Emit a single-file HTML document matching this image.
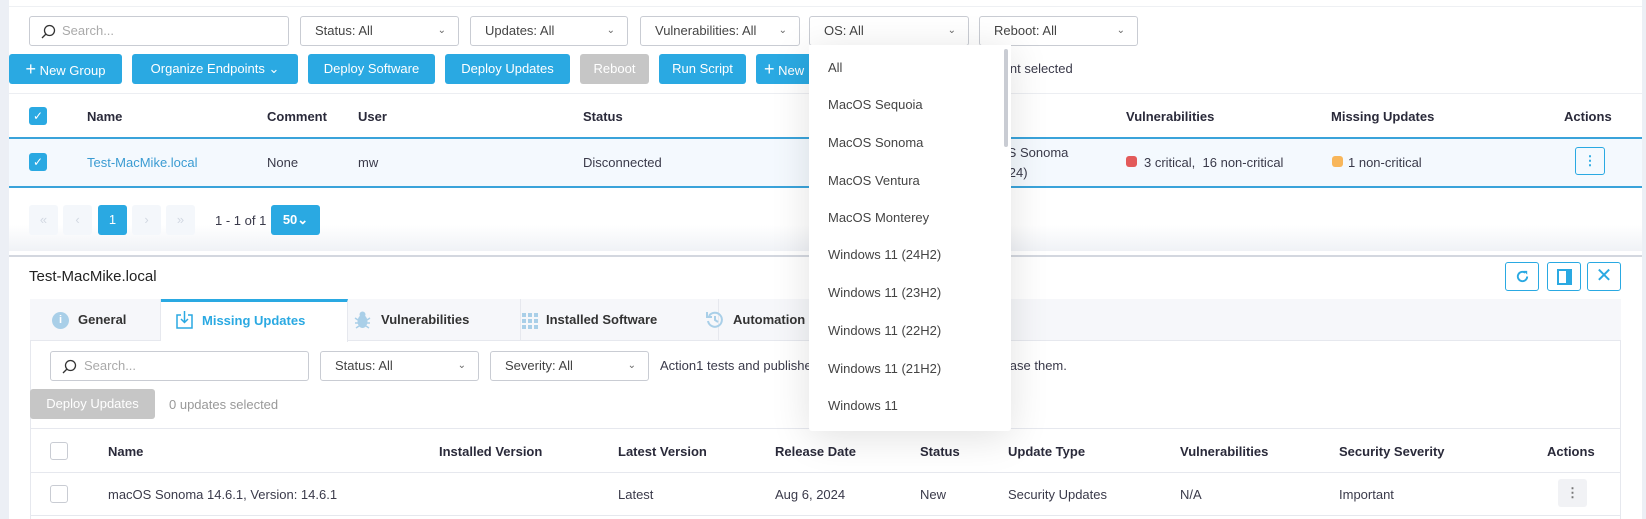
<!DOCTYPE html>
<html><head><meta charset="utf-8"><style>
*{box-sizing:border-box;margin:0;padding:0}
body{width:1646px;height:519px;overflow:hidden;background:#eceff5;font-family:"Liberation Sans",sans-serif;font-size:13px;color:#3a3a4a;position:relative}
.a{position:absolute}
.card{position:absolute;background:#fff}
.inp{position:absolute;border:1px solid #c9ccd3;border-radius:3px;background:#fff;height:30px;line-height:28px;padding-left:14px;color:#444}
.inp .ch{position:absolute;right:12px;top:0;color:#666;font-size:10px}
.btn{position:absolute;background:#2aa9e2;color:#fff;height:30px;line-height:30px;border-radius:3px;text-align:center;font-size:13px}
.h{position:absolute;font-weight:bold;color:#2a2a3a;font-size:13px}
.t{position:absolute;font-size:13px;color:#3a3a4a;white-space:nowrap}
.cb{position:absolute;width:18px;height:18px;border-radius:3px}
.pg{position:absolute;top:205px;width:29px;height:30px;background:#f4f7fb;border-radius:3px;color:#d2d8e2;text-align:center;line-height:30px}
.dd div{position:absolute;left:19px;font-size:13px;color:#444}
.tab{position:absolute;top:299px;height:42px;line-height:42px;font-weight:bold;font-size:13px;color:#333;border-right:1px solid #e6e8ee}
.ib{position:absolute;top:262px;width:34px;height:29px;border:1px solid #2aa9e2;border-radius:3px}
</style></head><body>
<div class="card" style="left:9px;top:0;width:1633px;height:250px;border-top:1px solid #eef0f3;top:6px"></div>
<div class="a" style="left:9px;top:0;width:1633px;height:6px;background:#fff"></div>
<div class="a" style="left:9px;top:225px;width:1633px;height:26px;background:linear-gradient(#fff,#f0f2f6)"></div>
<div class="inp" style="left:29px;top:16px;width:260px;color:#aaa;padding-left:32px">Search...
<svg class="a" style="left:10px;top:7px" width="16" height="16" viewBox="0 0 16 16"><circle cx="9.5" cy="6.5" r="5" fill="none" stroke="#333" stroke-width="1.3"/><path d="M6 10L2 14" stroke="#333" stroke-width="1.3"/></svg></div>
<div class="inp" style="left:300px;top:16px;width:159px">Status: All<span class="ch">&#8964;</span></div>
<div class="inp" style="left:470px;top:16px;width:158px">Updates: All<span class="ch">&#8964;</span></div>
<div class="inp" style="left:640px;top:16px;width:160px">Vulnerabilities: All<span class="ch">&#8964;</span></div>
<div class="inp" style="left:809px;top:16px;width:160px">OS: All<span class="ch">&#8964;</span></div>
<div class="inp" style="left:979px;top:16px;width:159px">Reboot: All<span class="ch">&#8964;</span></div>
<div class="btn" style="left:9px;top:54px;width:113px"><b style="font-size:18px;font-weight:normal">+</b> New Group</div>
<div class="btn" style="left:132px;top:54px;width:166px">Organize Endpoints &#8964;</div>
<div class="btn" style="left:308px;top:54px;width:127px">Deploy Software</div>
<div class="btn" style="left:445px;top:54px;width:125px">Deploy Updates</div>
<div class="btn" style="left:580px;top:54px;width:69px;background:#c6c6c6">Reboot</div>
<div class="btn" style="left:659px;top:54px;width:87px">Run Script</div>
<div class="btn" style="left:756px;top:54px;width:80px;text-align:left;padding-left:8px"><b style="font-size:18px;font-weight:normal">+</b> New</div>
<div class="t" style="left:960px;top:61px">1 endpoint selected</div>
<div class="a" style="left:9px;top:93px;width:1633px;height:1px;background:#eceef2"></div>
<div class="cb" style="left:29px;top:107px;background:#2aa9e2;color:#fff;font-size:12px;text-align:center;line-height:18px">&#10003;</div>
<div class="h" style="left:87px;top:109px">Name</div>
<div class="h" style="left:267px;top:109px">Comment</div>
<div class="h" style="left:358px;top:109px">User</div>
<div class="h" style="left:583px;top:109px">Status</div>
<div class="h" style="left:1126px;top:109px">Vulnerabilities</div>
<div class="h" style="left:1331px;top:109px">Missing Updates</div>
<div class="h" style="left:1564px;top:109px">Actions</div>
<div class="a" style="left:9px;top:137px;width:1633px;height:51px;background:#f4f9fe;border-top:2px solid #3aa3da;border-bottom:2px solid #3aa3da"></div>
<div class="cb" style="left:29px;top:153px;background:#2aa9e2;color:#fff;font-size:12px;text-align:center;line-height:18px">&#10003;</div>
<div class="t" style="left:87px;top:155px;color:#3a9bd2">Test-MacMike.local</div>
<div class="t" style="left:267px;top:155px">None</div>
<div class="t" style="left:358px;top:155px">mw</div>
<div class="t" style="left:583px;top:155px">Disconnected</div>
<div class="t" style="left:973px;top:145px">macOS Sonoma</div>
<div class="t" style="left:990px;top:165px">(2024)</div>
<div class="a" style="left:1126px;top:156px;width:11px;height:11px;border-radius:3px;background:#e35a5a"></div>
<div class="t" style="left:1144px;top:155px">3 critical, &nbsp;16 non-critical</div>
<div class="a" style="left:1332px;top:156px;width:11px;height:11px;border-radius:3px;background:#f8b65a"></div>
<div class="t" style="left:1348px;top:155px">1 non-critical</div>
<div class="a" style="left:1575px;top:147px;width:30px;height:28px;border:1px solid #2aa9e2;border-radius:3px;color:#2aa9e2;text-align:center;line-height:26px;font-weight:bold">&#8942;</div>
<div class="pg" style="left:29px">&laquo;</div>
<div class="pg" style="left:63px">&lsaquo;</div>
<div class="pg" style="left:98px;background:#2aa9e2;color:#fff">1</div>
<div class="pg" style="left:132px">&rsaquo;</div>
<div class="pg" style="left:166px">&raquo;</div>
<div class="t" style="left:215px;top:213px">1 - 1 of 1</div>
<div class="btn" style="left:271px;top:205px;width:49px;font-weight:bold">50&#8964;</div>
<div class="card" style="left:9px;top:255px;width:1633px;height:264px;border-top:2px solid #d3d7df"></div>
<div class="t" style="left:29px;top:268px;font-size:15px;color:#222">Test-MacMike.local</div>
<div class="ib" style="left:1505px"><svg class="a" style="left:9px;top:6px" width="15" height="15" viewBox="0 0 16 16"><path d="M13 8A5 5 0 1 1 11 4" fill="none" stroke="#2aa9e2" stroke-width="2"/><path d="M9 2h4v4z" fill="#2aa9e2"/></svg></div>
<div class="ib" style="left:1547px"><div class="a" style="left:9px;top:6px;width:15px;height:16px;border:2px solid #2aa9e2;border-right-width:6px"></div></div>
<div class="ib" style="left:1587px;color:#2aa9e2;text-align:center;font-size:20px;line-height:26px">&#10005;</div>
<div class="a" style="left:30px;top:299px;width:1591px;height:220px;border:1px solid #e6e8ee;border-bottom:none"></div>
<div class="a" style="left:30px;top:299px;width:1591px;height:42px;background:#f6f7fa;border-bottom:1px solid #e6e8ee"></div>
<div class="tab" style="left:30px;width:131px;padding-left:48px">General</div>
<div class="a" style="left:52px;top:312px;width:17px;height:17px;border-radius:50%;background:#a9cfe8;color:#fff;font-size:11px;text-align:center;line-height:17px;font-weight:bold">i</div>
<div class="tab" style="left:161px;width:187px;background:#fff;border-top:3px solid #2aa9e2;line-height:38px;padding-left:41px;color:#2aa9e2;height:43px">Missing Updates</div>
<svg class="a" style="left:176px;top:310px" width="17" height="19" viewBox="0 0 17 19"><path d="M5 5H1v13h15V5h-4M8.5 1v11M5 9l3.5 3.5L12 9" fill="none" stroke="#2aa9e2" stroke-width="1.5"/></svg>
<div class="tab" style="left:348px;width:173px;padding-left:33px">Vulnerabilities</div>
<svg class="a" style="left:354px;top:311px" width="17" height="18" viewBox="0 0 17 18"><ellipse cx="8.5" cy="10.5" rx="5" ry="6.5" fill="#a9cfe8"/><circle cx="8.5" cy="3.5" r="3" fill="#a9cfe8"/><path d="M1 7l3 2M16 7l-3 2M1 12h3M16 12h-3M2 17l3-2M15 17l-3-2" stroke="#a9cfe8" stroke-width="1.5"/></svg>
<div class="tab" style="left:521px;width:198px;padding-left:25px">Installed Software</div>
<svg class="a" style="left:522px;top:313px" width="16" height="16" viewBox="0 0 16 16" fill="#a9cfe8"><rect x="0" y="0" width="4" height="4"/><rect x="6" y="0" width="4" height="4"/><rect x="12" y="0" width="4" height="4"/><rect x="0" y="6" width="4" height="4"/><rect x="6" y="6" width="4" height="4"/><rect x="12" y="6" width="4" height="4"/><rect x="0" y="12" width="4" height="4"/><rect x="6" y="12" width="4" height="4"/><rect x="12" y="12" width="4" height="4"/></svg>
<div class="tab" style="left:719px;width:250px;padding-left:14px;border:none">Automation</div>
<svg class="a" style="left:706px;top:311px" width="18" height="18" viewBox="0 0 18 18"><path d="M3 5a7 7 0 1 1-1 5" fill="none" stroke="#a9cfe8" stroke-width="2"/><path d="M1 1v5h5" fill="none" stroke="#a9cfe8" stroke-width="2"/><path d="M9 5v4l3 2" fill="none" stroke="#a9cfe8" stroke-width="2"/></svg>
<div class="inp" style="left:50px;top:351px;width:259px;color:#aaa;padding-left:33px">Search...
<svg class="a" style="left:10px;top:7px" width="16" height="16" viewBox="0 0 16 16"><circle cx="9.5" cy="6.5" r="5" fill="none" stroke="#333" stroke-width="1.3"/><path d="M6 10L2 14" stroke="#333" stroke-width="1.3"/></svg></div>
<div class="inp" style="left:320px;top:351px;width:159px">Status: All<span class="ch">&#8964;</span></div>
<div class="inp" style="left:490px;top:351px;width:159px">Severity: All<span class="ch">&#8964;</span></div>
<div class="t" style="left:660px;top:358px">Action1 tests and publishes updates as soon as vendors release them.</div>
<div class="btn" style="left:30px;top:389px;width:125px;background:#c6c6c6">Deploy Updates</div>
<div class="t" style="left:169px;top:397px;color:#999">0 updates selected</div>
<div class="a" style="left:30px;top:428px;width:1591px;height:1px;background:#e6e8ee"></div>
<div class="cb" style="left:50px;top:442px;border:1px solid #c9ccd3"></div>
<div class="h" style="left:108px;top:444px">Name</div>
<div class="h" style="left:439px;top:444px">Installed Version</div>
<div class="h" style="left:618px;top:444px">Latest Version</div>
<div class="h" style="left:775px;top:444px">Release Date</div>
<div class="h" style="left:920px;top:444px">Status</div>
<div class="h" style="left:1008px;top:444px">Update Type</div>
<div class="h" style="left:1180px;top:444px">Vulnerabilities</div>
<div class="h" style="left:1339px;top:444px">Security Severity</div>
<div class="h" style="left:1547px;top:444px">Actions</div>
<div class="a" style="left:30px;top:472px;width:1591px;height:1px;background:#e6e8ee"></div>
<div class="cb" style="left:50px;top:485px;border:1px solid #c9ccd3"></div>
<div class="t" style="left:108px;top:487px">macOS Sonoma 14.6.1, Version: 14.6.1</div>
<div class="t" style="left:618px;top:487px">Latest</div>
<div class="t" style="left:775px;top:487px">Aug 6, 2024</div>
<div class="t" style="left:920px;top:487px">New</div>
<div class="t" style="left:1008px;top:487px">Security Updates</div>
<div class="t" style="left:1180px;top:487px">N/A</div>
<div class="t" style="left:1339px;top:487px">Important</div>
<div class="a" style="left:1558px;top:479px;width:29px;height:28px;background:#f1f2f5;border-radius:3px;color:#777;text-align:center;line-height:28px;font-weight:bold">&#8942;</div>
<div class="a" style="left:30px;top:515px;width:1591px;height:1px;background:#e6e8ee"></div>
<div class="a dd" style="left:809px;top:45px;width:202px;height:386px;background:#fff;box-shadow:0 6px 40px rgba(0,0,0,0.12);border-radius:0 0 3px 3px">
<div class="a" style="left:195px;top:4px;width:4px;height:98px;background:#c9ccd3;border-radius:2px"></div>
<div style="top:15px">All</div>
<div style="top:52px">MacOS Sequoia</div>
<div style="top:90px">MacOS Sonoma</div>
<div style="top:128px">MacOS Ventura</div>
<div style="top:165px">MacOS Monterey</div>
<div style="top:202px">Windows 11 (24H2)</div>
<div style="top:240px">Windows 11 (23H2)</div>
<div style="top:278px">Windows 11 (22H2)</div>
<div style="top:316px">Windows 11 (21H2)</div>
<div style="top:353px">Windows 11</div>
</div>
</body></html>
